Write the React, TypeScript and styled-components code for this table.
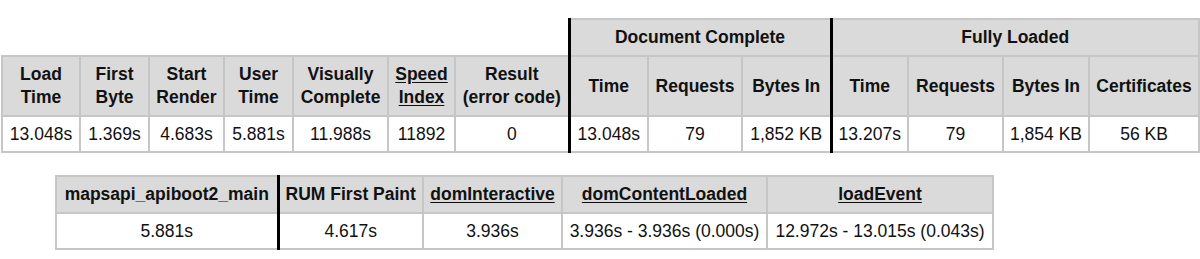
import React from 'react';
import styled, {createGlobalStyle} from "styled-components";

const GlobalStyle = createGlobalStyle`
  body {
    margin: 0;
    background: #ffffff;
    font-family: "Liberation Sans", Arial, sans-serif;
    color: #111111;
  }
`;

const Page = styled.div`
  display: flex;
  flex-direction: column;
  padding-top: 18px;
  gap: 22px;
`;

const Table = styled.table`
  border-collapse: collapse;
  table-layout: fixed;
  font-size: 17.5px;
  line-height: 23px;
  margin-left: ${({$left}: any) => $left}px;
  width: ${({$width}: any) => $width}px;
`;

const Col = styled.col`
  width: ${({$w}: any) => $w}px;
`;

const GroupGap = styled.th`
  border: none;
  background: transparent;
`;

const Th = styled.th`
  background: #dadada;
  border: 2px solid #c6c6c6;
  border-left: ${({$divider}: any) => $divider ? "3px solid #000" : "2px solid #c6c6c6"};
  font-weight: 700;
  text-align: center;
  vertical-align: middle;
  padding: 6px 3px;
  white-space: nowrap;
`;

const Td = styled.td`
  background: #ffffff;
  border: 2px solid #c6c6c6;
  border-left: ${({$divider}: any) => $divider ? "3px solid #000" : "2px solid #c6c6c6"};
  text-align: center;
  vertical-align: middle;
  padding: 6px 3px 5px;
  white-space: nowrap;
`;

const Link = styled.a`
  color: #111111;
  text-decoration: underline;
  text-underline-offset: 2px;
`;

const topCols = [78, 69, 75, 69, 95, 67, 114, 79, 94, 89, 77, 95, 86, 110];
const bottomCols = [222, 145, 139, 205, 226];

const topValues = [
    "13.048s", "1.369s", "4.683s", "5.881s", "11.988s", "11892", "0",
    "13.048s", "79", "1,852 KB", "13.207s", "79", "1,854 KB", "56 KB",
];

const App = () => {
    return (
        <Page>
            <GlobalStyle/>
            <Table $left={1} $width={1197}>
                <colgroup>
                    {topCols.map((w, i) => <Col key={i} $w={w}/>)}
                </colgroup>
                <thead>
                <tr>
                    <GroupGap colSpan={7}/>
                    <Th colSpan={3} $divider>Document Complete</Th>
                    <Th colSpan={4} $divider>Fully Loaded</Th>
                </tr>
                <tr>
                    <Th>Load<br/>Time</Th>
                    <Th>First<br/>Byte</Th>
                    <Th>Start<br/>Render</Th>
                    <Th>User<br/>Time</Th>
                    <Th>Visually<br/>Complete</Th>
                    <Th><Link>Speed<br/>Index</Link></Th>
                    <Th>Result<br/>(error code)</Th>
                    <Th $divider>Time</Th>
                    <Th>Requests</Th>
                    <Th>Bytes In</Th>
                    <Th $divider>Time</Th>
                    <Th>Requests</Th>
                    <Th>Bytes In</Th>
                    <Th>Certificates</Th>
                </tr>
                </thead>
                <tbody>
                <tr>
                    {topValues.map((v, i) => (
                        <Td key={i} $divider={i === 7 || i === 10}>{v}</Td>
                    ))}
                </tr>
                </tbody>
            </Table>
            <Table $left={55} $width={937}>
                <colgroup>
                    {bottomCols.map((w, i) => <Col key={i} $w={w}/>)}
                </colgroup>
                <thead>
                <tr>
                    <Th>mapsapi_apiboot2_main</Th>
                    <Th $divider>RUM First Paint</Th>
                    <Th><Link>domInteractive</Link></Th>
                    <Th><Link>domContentLoaded</Link></Th>
                    <Th><Link>loadEvent</Link></Th>
                </tr>
                </thead>
                <tbody>
                <tr>
                    <Td>5.881s</Td>
                    <Td $divider>4.617s</Td>
                    <Td>3.936s</Td>
                    <Td>3.936s - 3.936s (0.000s)</Td>
                    <Td>12.972s - 13.015s (0.043s)</Td>
                </tr>
                </tbody>
            </Table>
        </Page>
    );
};

export default App;
